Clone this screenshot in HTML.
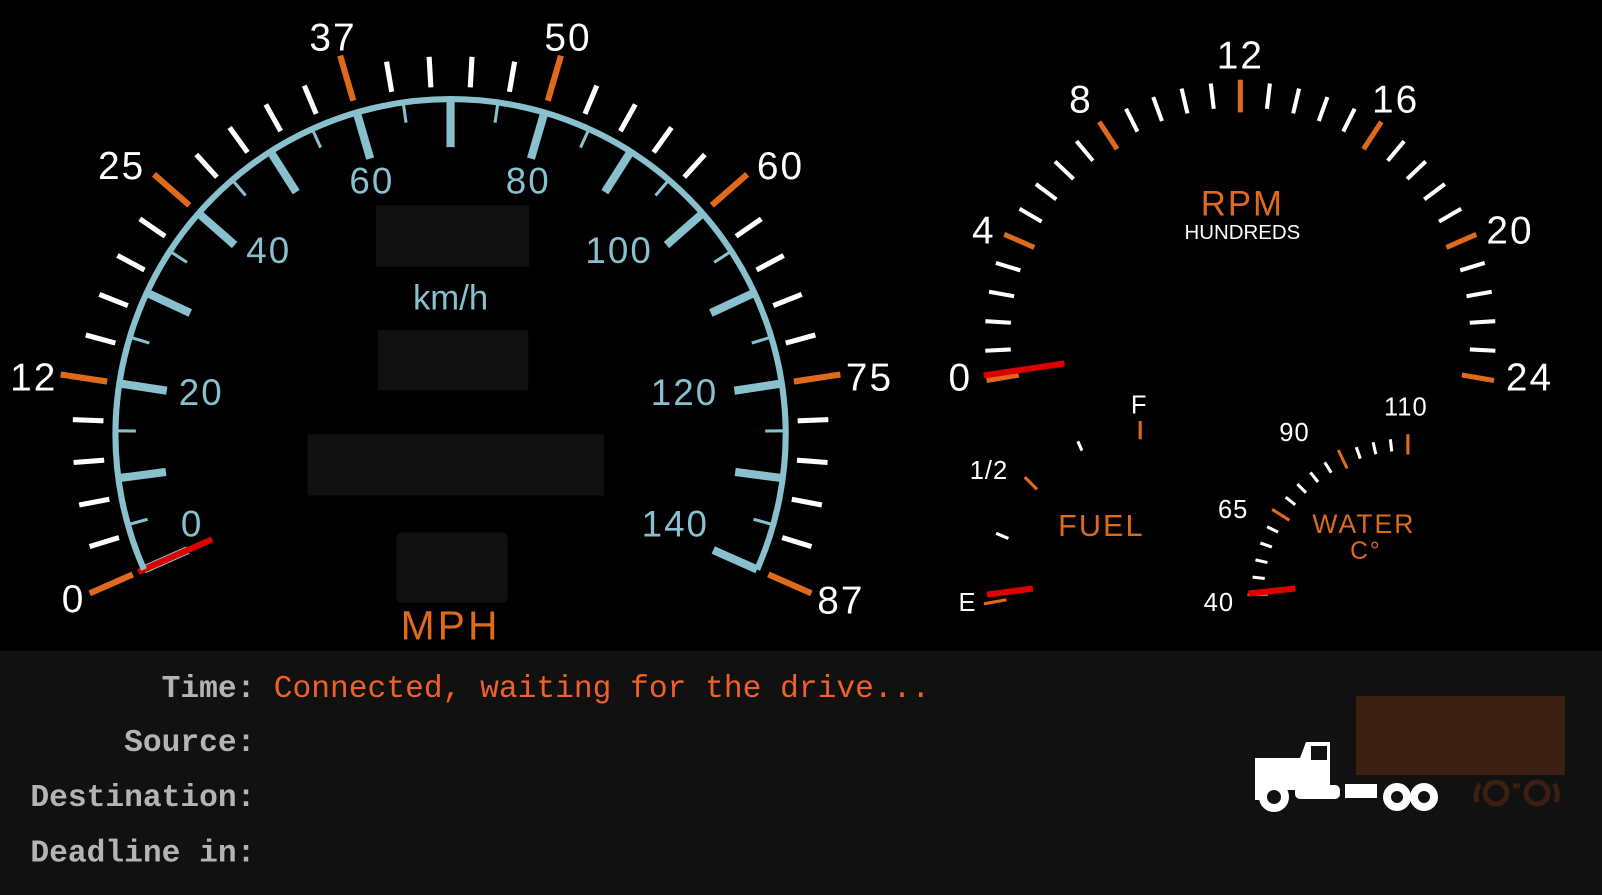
<!DOCTYPE html>
<html><head><meta charset="utf-8"><style>
html,body{margin:0;padding:0;background:#000;width:1602px;height:895px;overflow:hidden}
svg{display:block}
.n{font-family:"Liberation Sans",sans-serif;text-anchor:middle;dominant-baseline:central}
.lab{font-family:"Liberation Mono",monospace;font-weight:bold;fill:#b4b4b4;font-size:30.6px;text-anchor:end}
</style></head><body>
<svg id="s" width="1602" height="895" viewBox="0 0 1568 876" xmlns="http://www.w3.org/2000/svg">
<rect x="0" y="0" width="1568" height="637" fill="#000"/>
<rect x="0" y="637" width="1568" height="239" fill="#111"/>
<rect x="368" y="201" width="150" height="60" fill="#111"/>
<rect x="370" y="323" width="147" height="59" fill="#111"/>
<rect x="301" y="425" width="290" height="60" fill="#111"/>
<rect x="388" y="521" width="109" height="69" rx="6" fill="#111"/>
<g id="ticks"></g>
<path id="arc" fill="none" stroke="#88c0cd" stroke-width="6"/>
<g class="n" fill="#fff" font-size="38" letter-spacing="2">
<text x="72" y="587">0</text><text x="33" y="370">12</text><text x="119" y="163">25</text>
<text x="326" y="37">37</text><text x="556" y="37">50</text><text x="764" y="163">60</text>
<text x="851" y="370">75</text><text x="823" y="588">87</text>
</g>
<g class="n" fill="#88c0cd" font-size="36" letter-spacing="2">
<text x="188" y="513">0</text><text x="197" y="384">20</text><text x="263" y="245">40</text>
<text x="364" y="177">60</text><text x="517" y="177">80</text><text x="606" y="245">100</text>
<text x="670" y="384">120</text><text x="661" y="513">140</text>
<text x="441" y="292" font-size="34" letter-spacing="0">km/h</text>
</g>
<text class="n" x="441" y="612" fill="#e06a1c" font-size="40" letter-spacing="3">MPH</text>
<g class="n" fill="#fff" font-size="38" letter-spacing="2">
<text x="940" y="370">0</text><text x="963" y="226">4</text><text x="1058" y="98">8</text>
<text x="1214" y="55">12</text><text x="1366" y="98">16</text><text x="1478" y="226">20</text>
<text x="1497" y="370">24</text>
</g>
<text class="n" x="1216" y="200" fill="#e06a1c" font-size="34" letter-spacing="2">RPM</text>
<text class="n" x="1216" y="228" fill="#fff" font-size="20">HUNDREDS</text>
<g>
<line x1="963" y1="591" x2="985" y2="587" stroke="#e06a1c" stroke-width="3"/>
<line x1="975" y1="522" x2="987" y2="527" stroke="#fff" stroke-width="3"/>
<line x1="1003" y1="467" x2="1015" y2="479" stroke="#e06a1c" stroke-width="3"/>
<line x1="1055" y1="432" x2="1059" y2="441" stroke="#fff" stroke-width="3"/>
<line x1="1116" y1="412" x2="1116" y2="430" stroke="#e06a1c" stroke-width="3"/>
<line x1="966" y1="582" x2="1011" y2="576" stroke="#d00" stroke-width="6"/>
<line x1="1222" y1="581" x2="1268" y2="576" stroke="#d00" stroke-width="6"/>
</g>
<g class="n" fill="#fff" font-size="25" letter-spacing="1">
<text x="947" y="590">E</text><text x="968" y="461">1/2</text><text x="1115" y="397">F</text>
<text x="1193" y="590">40</text><text x="1207" y="499">65</text><text x="1267" y="424">90</text><text x="1376" y="399">110</text>
</g>
<g class="n" fill="#e06a1c" letter-spacing="2">
<text x="1078" y="515" font-size="30">FUEL</text>
<text x="1335" y="513" font-size="26">WATER</text>
<text x="1337" y="540" font-size="24">C°</text>
</g>
<text class="lab" x="250" y="682">Time:</text>
<text class="lab" x="250" y="735">Source:</text>
<text class="lab" x="250" y="789">Destination:</text>
<text class="lab" x="250" y="843">Deadline in:</text>
<text x="268" y="682" font-family="Liberation Mono,monospace" font-size="30.6" fill="#f0602a">Connected, waiting for the drive...</text>
<g transform="scale(0.97878)">
<rect x="1356" y="696" width="209" height="79" fill="#3b2012"/>
<g fill="none" stroke="#3b2012" stroke-width="5">
<circle cx="1496" cy="793" r="11"/><circle cx="1537" cy="793" r="11"/>
<path d="M1477 802 A20 20 0 0 1 1480 784"/><path d="M1513 786 A20 20 0 0 1 1520 786"/><path d="M1554 784 A20 20 0 0 1 1556 802"/>
</g>
<path fill="#fff" d="M1255 758 H1300 L1306 742 H1330 V790 H1265 V800 H1255 Z"/>
<rect x="1311" y="746" width="16" height="14" fill="#111"/>
<rect x="1295" y="785" width="45" height="14" rx="5" fill="#fff"/>
<rect x="1345" y="784" width="32" height="14" fill="#fff"/>
<g fill="#111" stroke="#fff" stroke-width="8">
<circle cx="1274" cy="797" r="11"/><circle cx="1397" cy="797" r="10"/><circle cx="1424" cy="797" r="10"/>
</g>
</g>
</svg>
<script>
(function(){
var NS="http://www.w3.org/2000/svg",g=document.getElementById("ticks");
function ln(x1,y1,x2,y2,c,w){var l=document.createElementNS(NS,"line");l.setAttribute("x1",x1);l.setAttribute("y1",y1);l.setAttribute("x2",x2);l.setAttribute("y2",y2);l.setAttribute("stroke",c);l.setAttribute("stroke-width",w);g.appendChild(l);}
function rad(cx,cy,a,r1,r2,c,w){var t=a*Math.PI/180,co=Math.cos(t),si=Math.sin(t);ln(cx-r1*co,cy-r1*si,cx-r2*co,cy-r2*si,c,w);}
var cx=441,cy=425,A0=-23.8,SW=227.6;
for(var i=0;i<=35;i++){var a=A0+SW*i/35;if(i%5==0)rad(cx,cy,a,340,386,"#e06a1c",6);else rad(cx,cy,a,340,370,"#fff",5);}
for(var k=0;k<=140;k+=5){var a=A0+SW*k/140;if(k%10==0)rad(cx,cy,a,281,328,"#88c0cd",8);else rad(cx,cy,a,308,328,"#88c0cd",3);}
var t0=A0*Math.PI/180,t1=(A0+SW)*Math.PI/180,R=328;
document.getElementById("arc").setAttribute("d","M"+(cx-R*Math.cos(t0))+" "+(cy-R*Math.sin(t0))+" A"+R+" "+R+" 0 1 1 "+(cx-R*Math.cos(t1))+" "+(cy-R*Math.sin(t1)));
rad(cx,cy,A0,334,255,"#d00",6);
var rx=1214,ry=330,B0=-9.7,BS=199.4;
for(var i=0;i<=30;i++){var a=B0+BS*i/30;if(i%5==0)rad(rx,ry,a,220,252,"#e06a1c",5);else rad(rx,ry,a,225,250,"#fff",4);}
rad(rx,ry,B0+1.2,254,174,"#d00",6);
var wx=1378,wy=582;
for(var v=40;v<=110;v+=5){var a=(v-40)/70*90;var o=(v==40||v==65||v==90||v==110);if(o)rad(wx,wy,a,137,157,"#e06a1c",3);else rad(wx,wy,a,141,153,"#fff",3);}
})();
</script>
</body></html>
